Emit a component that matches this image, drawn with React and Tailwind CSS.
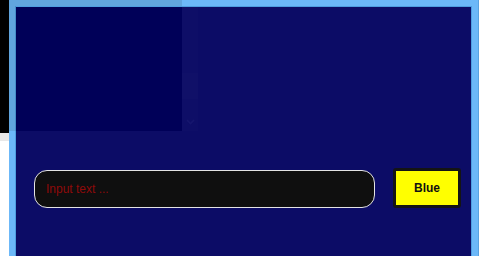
export default function App() {
  return (
    <div className="relative flex w-[488px] h-[256px] overflow-hidden bg-white font-['Liberation_Sans',Arial,sans-serif]">
      {/* left strip */}
      <div className="flex flex-col w-[9px] shrink-0">
        <div className="h-[133px] bg-black" />
        <div className="h-[8px] bg-[#e8e8e8]" />
        <div className="flex-1 bg-white" />
      </div>

      {/* window frame */}
      <div className="flex flex-col w-[470px] shrink-0 bg-[#6cb8f8] pt-[6px] px-[6px] border-r border-[#5aa2e0]">
        <div className="relative flex-1 bg-[#0c0c66] border-t border-l border-r border-[#4e9ee0]">
          {/* dimmed pane */}
          <div className="absolute left-0 top-0 w-[166px] h-[124px] bg-[#000058]" />
          {/* faint scroll column */}
          <div className="absolute left-[166px] top-0 w-[16px] h-[124px] bg-white/[0.012]">
            <div className="mt-[66px] h-[26px] bg-white/[0.01]" />
            <svg className="absolute left-[4px] top-[112px]" width="9" height="6" viewBox="0 0 9 6">
              <path d="M1 1 L4.5 4.5 L8 1" fill="none" stroke="#16166e" strokeWidth="1.6" />
            </svg>
          </div>

          <div className="flex items-start pt-[161px] pl-[18px] gap-[18px]">
            <div className="mt-[2px] flex items-center w-[341px] h-[38px] rounded-[13px] border border-[#e4e4e4] bg-[#0f0f0f] pl-[11px]">
              <span className="text-[12px] text-[#8e0a0a] leading-none">Input text ...</span>
            </div>
            <button className="flex items-center justify-center w-[68px] h-[40px] bg-[#ffff00] border-[3px] border-[#141414] rounded-[3px] text-[12px] font-bold text-[#111] leading-none">
              Blue
            </button>
          </div>
        </div>
      </div>

      <div className="flex-1 bg-white" />

      {/* dimming over the frame edges */}
      <div className="absolute left-[9px] top-0 w-[173px] h-[6px] bg-black/10" />
      <div className="absolute left-[9px] top-[6px] w-[7px] h-[125px] bg-black/10" />
    </div>
  );
}
